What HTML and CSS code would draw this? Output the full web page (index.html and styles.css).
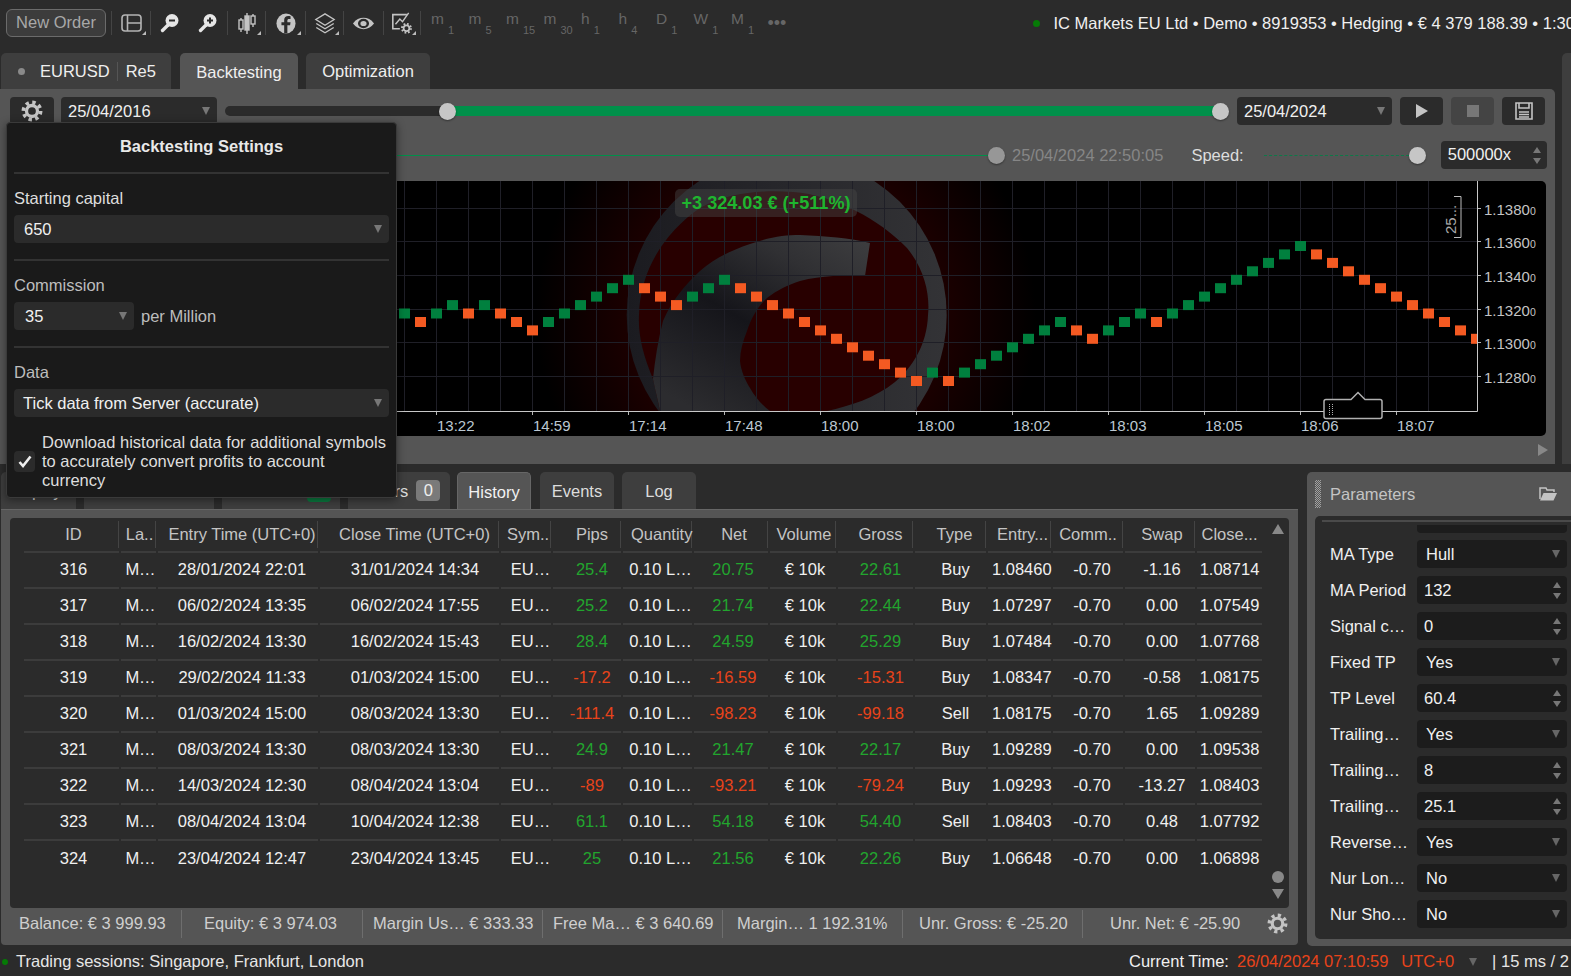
FILE: index.html
```html
<!DOCTYPE html>
<html lang="en">
<head>
    <meta charset="UTF-8">
    <title>cTrader Backtesting</title>
    <link rel="stylesheet" href="styles.css">
</head>
<body>
<svg class="defs" width="0" height="0">
    <symbol id="gear" viewBox="0 0 24 24">
        <circle cx="12" cy="12" r="6" fill="none" stroke="currentColor" stroke-width="3.6"/>
        <circle cx="12" cy="12" r="9.4" fill="none" stroke="currentColor" stroke-width="4" stroke-dasharray="3.7 3.68"/>
    </symbol>
    <symbol id="lens" viewBox="0 0 20 20">
        <circle cx="12" cy="7.5" r="6.5" fill="currentColor"/>
        <path d="M8 12 2.5 17.5" stroke="currentColor" stroke-width="3.4" stroke-linecap="round"/>
    </symbol>
</svg>

<div class="app">
    <header class="toolbar">
        <button class="new-order">New Order</button>
        <div class="tools">
            <span class="tool more">
                <svg width="21" height="18" viewBox="0 0 21 18"><rect x="1" y="1" width="19" height="16" rx="3" fill="none" stroke="#b4b4b4" stroke-width="1.600"/><path d="M6.500 1v16M6.500 9h13.500" stroke="#b4b4b4" stroke-width="1.600"/></svg>
            </span>
            <span class="tool plain">
                <svg width="20" height="20"><use href="#lens"/><path d="M9 7.5h6" stroke="#2b2b2b" stroke-width="2"/></svg>
            </span>
            <span class="tool">
                <svg width="20" height="20"><use href="#lens"/><path d="M9 7.5h6M12 4.5v6" stroke="#2b2b2b" stroke-width="2"/></svg>
            </span>
            <span class="tool more">
                <svg width="18" height="21" viewBox="0 0 18 21" fill="none" stroke="#c4c4c4" stroke-width="1.400"><path d="M3 5v14M9 0v21M15 1v13"/><rect x="1" y="7" width="4" height="9" fill="#2b2b2b"/><rect x="7" y="3" width="4" height="14" fill="#c4c4c4"/><rect x="13" y="3" width="4" height="8" fill="#2b2b2b"/></svg>
            </span>
            <span class="tool more">
                <svg width="20" height="21" viewBox="0 0 22 24" preserveAspectRatio="none"><ellipse cx="11" cy="12" rx="10.500" ry="11.500" fill="#c4c4c4"/><path d="M12.500 23v-9h3l.5-3.500h-3.500V8.500c0-1 .5-1.700 1.800-1.700H16V3.700c-.6-.1-1.500-.2-2.500-.2-2.700 0-4.500 1.600-4.500 4.600v2.400H6V14h3v9z" fill="#2b2b2b"/></svg>
            </span>
            <span class="tool more">
                <svg width="22" height="21" viewBox="0 0 24 24" preserveAspectRatio="none" fill="none" stroke="#c4c4c4" stroke-width="1.500"><path d="M12 1 22 7.500 12 14 2 7.500z"/><path d="M2.500 12 12 18 21.500 12M2.500 16.500 12 22.500 21.500 16.500"/></svg>
            </span>
            <span class="tool plain">
                <svg width="23" height="13" viewBox="0 0 24 16" preserveAspectRatio="none"><path d="M1 8C4 3 8 1 12 1s8 2 11 7c-3 5-7 7-11 7S4 13 1 8z" fill="#c4c4c4"/><circle cx="12" cy="8" r="4.500" fill="none" stroke="#2b2b2b" stroke-width="2.600"/></svg>
            </span>
            <span class="tool more">
                <svg width="23" height="22" viewBox="0 0 26 25"><path d="M18 3H2v16h8" fill="none" stroke="#c4c4c4" stroke-width="1.800"/><path d="M5 14 10 8l3 3 7-10" fill="none" stroke="#c4c4c4" stroke-width="1.600"/><use href="#gear" x="11" y="12" width="13" height="13" color="#c4c4c4"/></svg>
            </span>
        </div>
        <div class="timeframes">
            <span class="tf">m<sub>1</sub></span>
            <span class="tf">m<sub>5</sub></span>
            <span class="tf">m<sub>15</sub></span>
            <span class="tf">m<sub>30</sub></span>
            <span class="tf">h<sub>1</sub></span>
            <span class="tf">h<sub>4</sub></span>
            <span class="tf">D<sub>1</sub></span>
            <span class="tf">W<sub>1</sub></span>
            <span class="tf">M<sub>1</sub></span>
            <span class="tf-more">•••</span>
        </div>
        <i class="dot conn"></i>
        <span class="account">IC Markets EU Ltd • Demo • 8919353 • Hedging • € 4 379 188.39 • 1:30</span>
    </header>

    <nav class="tabs">
        <div class="tab tab-symbol"><i class="dot grey"></i><span class="sym">EURUSD</span><span class="bot">Re5</span></div>
        <div class="tab tab-backtest active">Backtesting</div>
        <div class="tab tab-optimize">Optimization</div>
    </nav>

    <section class="upper">
        <div class="bt-panel">
            <div class="bt-row">
                <button class="icon-btn gear-btn"><svg width="22" height="22"><use href="#gear"/></svg></button>
                <div class="select date-from">25/04/2016</div>
                <div class="range">
                    <span class="range-off"></span>
                    <i class="thumb"></i>
                    <span class="range-on"></span>
                    <i class="thumb"></i>
                </div>
                <div class="select date-to">25/04/2024</div>
                <button class="icon-btn"><svg width="12" height="14"><path d="M0 0 12 7 0 14z" fill="#c4c4c4"/></svg></button>
                <button class="icon-btn off"><svg width="12" height="12"><rect width="12" height="12" fill="#777"/></svg></button>
                <button class="icon-btn"><svg width="18" height="18" viewBox="0 0 18 18" fill="none" stroke="#c4c4c4" stroke-width="1.600"><path d="M1 1h16v16H1z"/><path d="M4 1v5h10V1M4 10h10M4 12.500h10M4 15h10"/></svg></button>
            </div>
            <div class="bt-row second">
                <span class="progress"></span>
                <i class="thumb dim"></i>
                <span class="now">25/04/2024 22:50:05</span>
                <span class="speed-label">Speed:</span>
                <span class="speed-line"></span>
                <i class="thumb"></i>
                <div class="speed-box spin">500000x</div>
            </div>
            <div class="chart">
                <svg class="chart-svg" width="1535" height="255" viewBox="10 181 1535 255">
                    <defs>
                        <radialGradient id="glow" gradientUnits="userSpaceOnUse" cx="786" cy="315" r="250">
                            <stop offset="0" stop-color="#200000"/>
                            <stop offset=".62" stop-color="#1c0000"/>
                            <stop offset="1" stop-color="#000"/>
                        </radialGradient>
                        <linearGradient id="swirl" x1=".9" y1="0" x2=".2" y2="1">
                            <stop offset="0" stop-color="#3c3c3e"/>
                            <stop offset=".22" stop-color="#303033"/>
                            <stop offset=".55" stop-color="#15151a"/>
                            <stop offset="1" stop-color="#2c2c2f"/>
                        </linearGradient>
                        <linearGradient id="ring" x1="0" y1="0" x2="1" y2="0">
                            <stop offset="0" stop-color="#1b1b20"/>
                            <stop offset="1" stop-color="#333336"/>
                        </linearGradient>
                        <clipPath id="plot"><rect x="397" y="181" width="1081" height="230"/></clipPath>
                    </defs>
                    <g clip-path="url(#plot)">
                        <rect x="450" y="181" width="680" height="230" fill="url(#glow)"/>
                        <circle cx="786.700" cy="315" r="160" fill="url(#ring)"/>
                        <path d="M653 379C643 355 638 335 639 315 640 270 665 232 700 208 730 192 760 190 793 192 835 195 880 220 907 248 925 270 930 295 928 315 927 345 912 368 895 382 875 398 850 406 827 411H660z" fill="#280000"/>
                        <path d="M653 379C655 360 658 340 663 321 672 300 685 285 700 271 715 258 732 250 750 244 770 237 785 235 800 235 825 236 850 238 870 243L865 276C855 275 845 275 833 276 822 277 811 278 800 281 788 285 777 290 767 298 757 307 751 319 747 331 743 341 740 351 740 361 741 371 745 380 750 388 755 397 762 405 770 411H660C658 400 655 390 653 379z" fill="url(#swirl)"/>
                    </g>

                    <path class="grid" d="M397 208.500H1478M397 241.500H1478M397 275.500H1478M397 309.500H1478M397 342.500H1478M397 376.500H1478M404.500 181V411M436.500 181V411M468.500 181V411M500.500 181V411M532.500 181V411M564.500 181V411M596.500 181V411M628.500 181V411M660.500 181V411M692.500 181V411M724.500 181V411M756.500 181V411M788.500 181V411M820.500 181V411M852.500 181V411M884.500 181V411M916.500 181V411M948.500 181V411M980.500 181V411M1012.500 181V411M1044.500 181V411M1076.500 181V411M1108.500 181V411M1140.500 181V411M1172.500 181V411M1204.500 181V411M1236.500 181V411M1268.500 181V411M1300.500 181V411M1332.500 181V411M1364.500 181V411M1396.500 181V411M1428.500 181V411"/>

                    <g class="up">
                        <rect x="399" y="308.500"/><rect x="431" y="308.500"/><rect x="447" y="300.100"/><rect x="479" y="300.100"/>
                        <rect x="543" y="317"/><rect x="559" y="308.500"/><rect x="575" y="300.100"/><rect x="591" y="291.600"/>
                        <rect x="607" y="283.200"/><rect x="623" y="274.800"/><rect x="687" y="291.600"/><rect x="703" y="283.200"/>
                        <rect x="719" y="274.800"/><rect x="927" y="367.600"/><rect x="959" y="367.600"/><rect x="975" y="359.200"/>
                        <rect x="991" y="350.700"/><rect x="1007" y="342.300"/><rect x="1023" y="333.800"/><rect x="1039" y="325.400"/>
                        <rect x="1055" y="317"/><rect x="1103" y="325.400"/><rect x="1119" y="317"/><rect x="1135" y="308.500"/>
                        <rect x="1167" y="308.500"/><rect x="1183" y="300.100"/><rect x="1199" y="291.600"/><rect x="1215" y="283.200"/>
                        <rect x="1231" y="274.800"/><rect x="1247" y="266.300"/><rect x="1263" y="257.900"/><rect x="1279" y="249.400"/>
                        <rect x="1295" y="241"/>
                    </g>
                    <g class="down">
                        <rect x="415" y="317"/><rect x="463" y="308.500"/><rect x="495" y="308.500"/><rect x="511" y="317"/>
                        <rect x="527" y="325.400"/><rect x="639" y="283.200"/><rect x="655" y="291.600"/><rect x="671" y="300.100"/>
                        <rect x="735" y="283.200"/><rect x="751" y="291.600"/><rect x="767" y="300.100"/><rect x="783" y="308.500"/>
                        <rect x="799" y="317"/><rect x="815" y="325.400"/><rect x="831" y="333.800"/><rect x="847" y="342.300"/>
                        <rect x="863" y="350.700"/><rect x="879" y="359.200"/><rect x="895" y="367.600"/><rect x="911" y="376"/>
                        <rect x="943" y="376"/><rect x="1071" y="325.400"/><rect x="1087" y="333.800"/><rect x="1151" y="317"/>
                        <rect x="1311" y="249.400"/><rect x="1327" y="257.900"/><rect x="1343" y="266.300"/><rect x="1359" y="274.800"/>
                        <rect x="1375" y="283.200"/><rect x="1391" y="291.600"/><rect x="1407" y="300.100"/><rect x="1423" y="308.500"/>
                        <rect x="1439" y="317"/><rect x="1455" y="325.400"/><rect x="1471" y="333.800" class="clipped"/>
                    </g>

                    <path class="axis" d="M397 411.500H1477.500V181"/>
                    <path class="tick" d="M436.500 412v3M532.500 412v3M628.500 412v3M724.500 412v3M820.500 412v3M916.500 412v3M1012.500 412v3M1108.500 412v3M1204.500 412v3M1300.500 412v3M1396.500 412v3M1478 208.500h3M1478 241.500h3M1478 275.500h3M1478 309.500h3M1478 342.500h3M1478 376.500h3"/>

                    <g class="xlabels">
                        <text x="437" y="431">13:22</text><text x="533" y="431">14:59</text><text x="629" y="431">17:14</text>
                        <text x="725" y="431">17:48</text><text x="821" y="431">18:00</text><text x="917" y="431">18:00</text>
                        <text x="1013" y="431">18:02</text><text x="1109" y="431">18:03</text><text x="1205" y="431">18:05</text>
                        <text x="1301" y="431">18:06</text><text x="1397" y="431">18:07</text>
                    </g>
                    <g class="ylabels">
                        <text x="1484" y="215">1.1380<tspan class="small">0</tspan></text>
                        <text x="1484" y="248">1.1360<tspan class="small">0</tspan></text>
                        <text x="1484" y="282">1.1340<tspan class="small">0</tspan></text>
                        <text x="1484" y="316">1.1320<tspan class="small">0</tspan></text>
                        <text x="1484" y="349">1.1300<tspan class="small">0</tspan></text>
                        <text x="1484" y="383">1.1280<tspan class="small">0</tspan></text>
                    </g>

                    <path class="bracket" d="M1454 196.500h7v41h-7"/>
                    <text class="vtag" transform="rotate(-90 1456 234)" x="1456" y="234">25...</text>

                    <path class="handle" d="M1326 399.500h25l7-7 7 7h15q2 0 2 2v15q0 2-2 2h-54q-2 0-2-2v-15q0-2 2-2z"/>
                    <path class="handle-grip" d="M1329.500 404v12M1332.500 404v12"/>
                </svg>
                <div class="profit">+3 324.03 € (+511%)</div>
            </div>
            <div class="bt-foot"><svg width="10" height="12"><path d="M0 0 10 6 0 12z" fill="#888"/></svg></div>
        </div>
        <div class="side-strip"></div>
    </section>

    <section class="lower">
        <div class="results">
            <div class="res-tabs">
                <div class="res-tab w1">Equity</div>
                <div class="res-tab w2"></div>
                <div class="res-tab w3"><b class="badge green"></b></div>
                <div class="res-tab w4">Orders<b class="badge">0</b></div>
                <div class="res-tab active w5">History</div>
                <div class="res-tab w6">Events</div>
                <div class="res-tab w7">Log</div>
            </div>
            <div class="res-panel">
                <div class="table-card">
                    <table class="history">
                        <colgroup>
                            <col class="c1"><col class="c2"><col class="c3"><col class="c4"><col class="c5">
                            <col class="c6"><col class="c7"><col class="c8"><col class="c9"><col class="c10">
                            <col class="c11"><col class="c12"><col class="c13"><col class="c14"><col class="c15">
                        </colgroup>
                        <thead>
                            <tr><th>ID</th><th>La..</th><th>Entry Time (UTC+0)</th><th>Close Time (UTC+0)</th><th>Sym..</th><th>Pips</th><th>Quantity</th><th>Net</th><th>Volume</th><th>Gross</th><th>Type</th><th>Entry...</th><th>Comm..</th><th>Swap</th><th>Close...</th></tr>
                        </thead>
                        <tbody>
                            <tr><td>316</td><td>M…</td><td>28/01/2024 22:01</td><td>31/01/2024 14:34</td><td>EU…</td><td class="pos">25.4</td><td>0.10 L…</td><td class="pos">20.75</td><td>€ 10k</td><td class="pos">22.61</td><td>Buy</td><td>1.08460</td><td>-0.70</td><td>-1.16</td><td>1.08714</td></tr>
                            <tr><td>317</td><td>M…</td><td>06/02/2024 13:35</td><td>06/02/2024 17:55</td><td>EU…</td><td class="pos">25.2</td><td>0.10 L…</td><td class="pos">21.74</td><td>€ 10k</td><td class="pos">22.44</td><td>Buy</td><td>1.07297</td><td>-0.70</td><td>0.00</td><td>1.07549</td></tr>
                            <tr><td>318</td><td>M…</td><td>16/02/2024 13:30</td><td>16/02/2024 15:43</td><td>EU…</td><td class="pos">28.4</td><td>0.10 L…</td><td class="pos">24.59</td><td>€ 10k</td><td class="pos">25.29</td><td>Buy</td><td>1.07484</td><td>-0.70</td><td>0.00</td><td>1.07768</td></tr>
                            <tr><td>319</td><td>M…</td><td>29/02/2024 11:33</td><td>01/03/2024 15:00</td><td>EU…</td><td class="neg">-17.2</td><td>0.10 L…</td><td class="neg">-16.59</td><td>€ 10k</td><td class="neg">-15.31</td><td>Buy</td><td>1.08347</td><td>-0.70</td><td>-0.58</td><td>1.08175</td></tr>
                            <tr><td>320</td><td>M…</td><td>01/03/2024 15:00</td><td>08/03/2024 13:30</td><td>EU…</td><td class="neg">-111.4</td><td>0.10 L…</td><td class="neg">-98.23</td><td>€ 10k</td><td class="neg">-99.18</td><td>Sell</td><td>1.08175</td><td>-0.70</td><td>1.65</td><td>1.09289</td></tr>
                            <tr><td>321</td><td>M…</td><td>08/03/2024 13:30</td><td>08/03/2024 13:30</td><td>EU…</td><td class="pos">24.9</td><td>0.10 L…</td><td class="pos">21.47</td><td>€ 10k</td><td class="pos">22.17</td><td>Buy</td><td>1.09289</td><td>-0.70</td><td>0.00</td><td>1.09538</td></tr>
                            <tr><td>322</td><td>M…</td><td>14/03/2024 12:30</td><td>08/04/2024 13:04</td><td>EU…</td><td class="neg">-89</td><td>0.10 L…</td><td class="neg">-93.21</td><td>€ 10k</td><td class="neg">-79.24</td><td>Buy</td><td>1.09293</td><td>-0.70</td><td>-13.27</td><td>1.08403</td></tr>
                            <tr><td>323</td><td>M…</td><td>08/04/2024 13:04</td><td>10/04/2024 12:38</td><td>EU…</td><td class="pos">61.1</td><td>0.10 L…</td><td class="pos">54.18</td><td>€ 10k</td><td class="pos">54.40</td><td>Sell</td><td>1.08403</td><td>-0.70</td><td>0.48</td><td>1.07792</td></tr>
                            <tr><td>324</td><td>M…</td><td>23/04/2024 12:47</td><td>23/04/2024 13:45</td><td>EU…</td><td class="pos">25</td><td>0.10 L…</td><td class="pos">21.56</td><td>€ 10k</td><td class="pos">22.26</td><td>Buy</td><td>1.06648</td><td>-0.70</td><td>0.00</td><td>1.06898</td></tr>
                        </tbody>
                    </table>
                    <div class="scroll">
                        <i class="arrow-up"></i>
                        <span class="scroll-fill"></span>
                        <i class="scroll-thumb"></i>
                        <i class="arrow-down"></i>
                    </div>
                </div>
                <div class="stats">
                    <span class="stat s1">Balance: € 3 999.93</span>
                    <span class="stat s2">Equity: € 3 974.03</span>
                    <span class="stat s3">Margin Us… € 333.33</span>
                    <span class="stat s4">Free Ma… € 3 640.69</span>
                    <span class="stat s5">Margin… 1 192.31%</span>
                    <span class="stat s6">Unr. Gross: € -25.20</span>
                    <span class="stat s7">Unr. Net: € -25.90</span>
                    <svg class="stats-gear" width="21" height="21"><use href="#gear"/></svg>
                </div>
            </div>
        </div>

        <aside class="params">
            <div class="params-head">
                <i class="grip"></i>
                <span class="params-title">Parameters</span>
                <svg width="18" height="14" viewBox="0 0 18 14"><path d="M1 12V1h6l1 2h7v2" fill="none" stroke="#c4c4c4" stroke-width="1.500"/><path d="M4.500 6H18l-3.500 7.500H1z" fill="#c4c4c4"/></svg>
            </div>
            <div class="params-body">
                <div class="params-rule"></div>
                <div class="control cut"></div>
                <div class="param"><label>MA Type</label><div class="control select-ctl">Hull</div></div>
                <div class="param"><label>MA Period</label><div class="control spin">132</div></div>
                <div class="param"><label>Signal c…</label><div class="control spin">0</div></div>
                <div class="param"><label>Fixed TP</label><div class="control select-ctl">Yes</div></div>
                <div class="param"><label>TP Level</label><div class="control spin">60.4</div></div>
                <div class="param"><label>Trailing…</label><div class="control select-ctl">Yes</div></div>
                <div class="param"><label>Trailing…</label><div class="control spin">8</div></div>
                <div class="param"><label>Trailing…</label><div class="control spin">25.1</div></div>
                <div class="param"><label>Reverse…</label><div class="control select-ctl">Yes</div></div>
                <div class="param"><label>Nur Lon…</label><div class="control select-ctl">No</div></div>
                <div class="param"><label>Nur Sho…</label><div class="control select-ctl">No</div></div>
            </div>
        </aside>
    </section>

    <footer class="status">
        <i class="dot conn small"></i>
        <span class="sessions">Trading sessions: Singapore, Frankfurt, London</span>
        <span class="clock">Current Time:</span>
        <span class="clock-red time">26/04/2024 07:10:59</span>
        <span class="clock-red zone">UTC+0</span>
        <i class="clock-arrow"></i>
        <span class="latency">| 15 ms / 2 ms</span>
    </footer>

    <div class="popup">
        <h3 class="popup-title">Backtesting Settings</h3>
        <div class="popup-block">
            <div class="field-label bright">Starting capital</div>
            <div class="select full">650</div>
        </div>
        <div class="popup-block">
            <div class="field-label">Commission</div>
            <div class="inline-field"><div class="select short">35</div><span>per Million</span></div>
        </div>
        <div class="popup-block">
            <div class="field-label">Data</div>
            <div class="select full tight">Tick data from Server (accurate)</div>
        </div>
        <div class="check-row">
            <span class="checkbox"><svg width="14" height="13" viewBox="0 0 14 13"><path d="M1.500 7 5 11 12.500 1.500" fill="none" stroke="#eee" stroke-width="2.600"/></svg></span>
            <span class="check-text">Download historical data for additional symbols to accurately convert profits to account currency</span>
        </div>
    </div>
</div>
</body>
</html>
```

FILE: styles.css
```css
* {
    box-sizing: border-box;
}

body {
    margin: 0;
    background: #2b2b2b;
    font-family: "Liberation Sans", Arial, sans-serif;
    font-size: 16.5px;
    color: #e6e6e6;
}

.defs {
    display: block;
    height: 0;
}

button {
    font: inherit;
    padding: 0;
    border: none;
}

.app {
    position: relative;
    width: 1571px;
    height: 976px;
    overflow: hidden;
    background: #2b2b2b;
}

.dot {
    display: block;
    flex: none;
    width: 7px;
    height: 7px;
    border-radius: 50%;
}
.dot.grey { background: #8a8a8a; }
.dot.conn { background: #067a06; }

/* top toolbar */
.toolbar {
    display: flex;
    align-items: center;
    height: 46px;
    padding: 0 0 0 6px;
    white-space: nowrap;
}

.new-order {
    flex: none;
    width: 100px;
    height: 28px;
    margin-top: -1px;
    border: 1px solid #6b6b6b;
    border-radius: 6px;
    background: #3c3c3c;
    color: #a8a8a8;
}

.tools {
    display: flex;
    margin-left: 5px;
}

.tool {
    position: relative;
    display: flex;
    align-items: center;
    justify-content: center;
    width: 39px;
    height: 24px;
    border-left: 1px solid #444;
}
.tool:nth-child(2) { width: 38px; }
.tool:nth-child(3) { border-left: none; }
.tool:nth-child(4) { width: 38px; }
.tool:nth-child(5) { width: 40px; }
.tool:nth-child(6) { width: 38px; }
.tool:nth-child(7) { width: 40px; }
.tool:nth-child(8) { width: 38px; border-right: 1px solid #444; }

.tool.more::after {
    content: "";
    position: absolute;
    right: 4px;
    bottom: 0;
    border-style: solid;
    border-width: 0 0 4px 4px;
    border-color: transparent transparent #bbb transparent;
}

.timeframes {
    display: flex;
    align-items: center;
    margin-left: 10px;
    color: #666;
}

.tf {
    width: 37.500px;
    font-size: 15.500px;
    line-height: 20px;
    margin-top: -8px;
}
.tf sub {
    font-size: 11px;
    line-height: 0;
    vertical-align: -10px;
    margin-left: 4px;
}

.tf-more {
    font-size: 18px;
    margin-left: -1px;
}

.toolbar .conn {
    margin-left: 247px;
}

.account {
    margin-left: 13px;
    color: #f0f0f0;
}

/* main tabs */
.tabs {
    display: flex;
    height: 36px;
    margin-top: 7px;
}

.tab {
    display: flex;
    align-items: center;
    justify-content: center;
    border-radius: 5px 5px 0 0;
    background: #3e3e3e;
    color: #efefef;
}
.tab.active { background: #555; padding-top: 2px; }

.tab-symbol {
    width: 170px;
    margin-left: 1px;
    justify-content: flex-start;
    padding-left: 17px;
}
.tab-symbol .sym { margin-left: 15px; padding-right: 7px; border-right: 1px solid #555; }
.tab-symbol .bot { margin-left: 8px; }
.tab-backtest { width: 118px; margin-left: 9px; }
.tab-optimize { width: 124px; margin-left: 8px; }

/* backtest panel */
.upper {
    display: flex;
    height: 375px;
}

.bt-panel {
    flex: none;
    width: 1555px;
    padding: 8px 9px 0 10px;
    background: #555;
    border-radius: 0 5px 0 0;
}

.bt-row {
    display: flex;
    align-items: center;
    height: 28px;
}
.bt-row.second {
    margin-top: 16px;
}

.select {
    position: relative;
    display: flex;
    align-items: center;
    flex: none;
    height: 28px;
    padding-left: 7px;
    border-radius: 4px;
    background: #2b2b2b;
    color: #f0f0f0;
}
.select::after,
.select-ctl::after {
    content: "";
    position: absolute;
    right: 7px;
    top: 50%;
    margin-top: -4px;
    border-style: solid;
    border-width: 8px 4px 0 4px;
    border-color: #777 transparent transparent transparent;
}

.icon-btn {
    display: flex;
    align-items: center;
    justify-content: center;
    flex: none;
    width: 43px;
    height: 28px;
    margin-left: 8px;
    border-radius: 4px;
    background: #2b2b2b;
    color: #c4c4c4;
}
.icon-btn.off { background: #444; }
.gear-btn { margin-left: 0; width: 44px; }

.date-from {
    width: 156px;
    margin-left: 7px;
}
.date-to {
    width: 155px;
    margin-left: 8px;
}

.range {
    display: flex;
    align-items: center;
    flex: none;
    width: 1004px;
    margin-left: 8px;
}
.range-off {
    flex: none;
    width: 223px;
    height: 10px;
    margin-right: -9px;
    border-radius: 5px 0 0 5px;
    background: #2b2b2b;
}
.range-on {
    flex: none;
    width: 774px;
    height: 10px;
    margin: 0 -9px;
    background: #00904a;
}

.thumb {
    position: relative;
    z-index: 1;
    display: block;
    flex: none;
    width: 17px;
    height: 17px;
    border-radius: 50%;
    background: #c6c6c6;
    box-shadow: 0 1px 2px rgba(0, 0, 0, .4);
}
.thumb.dim { background: #979797; }

.progress {
    flex: none;
    width: 978px;
    height: 1px;
    background: #00904a;
}

.now {
    flex: none;
    margin-left: 7px;
    color: #868686;
}
.speed-label {
    flex: none;
    margin-left: 28px;
    color: #ddd;
}
.speed-line {
    flex: none;
    width: 145px;
    margin-left: 20px;
    border-top: 1px dashed #0d7a48;
}
.speed-box {
    position: relative;
    display: flex;
    align-items: center;
    flex: none;
    width: 106px;
    height: 28px;
    margin-left: 15px;
    padding: 0 0 2px 7px;
    border-radius: 4px;
    background: #2b2b2b;
    color: #f0f0f0;
}

.spin::before,
.spin::after {
    content: "";
    position: absolute;
    right: 6px;
    border-style: solid;
}
.spin::before {
    top: 6px;
    border-width: 0 4px 6px 4px;
    border-color: transparent transparent #777 transparent;
}
.spin::after {
    bottom: 5px;
    border-width: 6px 4px 0 4px;
    border-color: #777 transparent transparent transparent;
}

/* chart */
.chart {
    position: relative;
    height: 255px;
    margin-top: 12px;
    background: #000;
    border-radius: 0 5px 5px 0;
    overflow: hidden;
}
.chart-svg { display: block; }

.grid { fill: none; stroke: #1f1f27; stroke-width: 1; }
.up rect { width: 11px; height: 10px; fill: #00803e; }
.down rect { width: 11px; height: 10px; fill: #f45a22; }
.down rect.clipped { width: 6px; }
.axis { fill: none; stroke: #c8c8c8; stroke-width: 1; }
.tick { fill: none; stroke: #b5b5b5; stroke-width: 1; }

.xlabels text {
    font-size: 15px;
    fill: #bcc8d2;
}
.ylabels text {
    font-size: 15px;
    fill: #c4c4c4;
}
.ylabels .small { font-size: 10.500px; }

.bracket { fill: none; stroke: #bbb; stroke-width: 1; }
.vtag { font-size: 15px; fill: #aaa; }
.handle { fill: #000; stroke: #b0b0b0; stroke-width: 1.500; }
.handle-grip { stroke: #b0b0b0; stroke-width: 1; stroke-dasharray: 1 1; }

.profit {
    position: absolute;
    left: 665px;
    top: 8px;
    width: 182px;
    height: 28px;
    line-height: 28px;
    text-align: center;
    border-radius: 5px;
    background: rgba(70, 70, 70, .45);
    color: #1fb52f;
    font-size: 18.100px;
    font-weight: bold;
}

.bt-foot {
    display: flex;
    justify-content: flex-end;
    padding: 8px 0 0;
    margin-right: -2px;
}

.side-strip {
    width: 9px;
    margin-left: 7px;
    margin-top: -36px;
    background: #3e3e3e;
    border-radius: 5px 0 0 0;
}

/* results */
.lower {
    display: flex;
    height: 474px;
    margin-top: 8px;
}

.results {
    flex: none;
    width: 1297px;
    margin-left: 1px;
}

.res-tabs {
    display: flex;
    height: 37px;
}

.res-tab {
    display: flex;
    align-items: center;
    justify-content: center;
    height: 37px;
    margin-right: 8px;
    padding-top: 2px;
    border-radius: 5px 5px 0 0;
    background: #3e3e3e;
    color: #dcdcdc;
}
.res-tab.active {
    border: 1px solid #666;
    border-bottom: none;
    background: #555;
    color: #f2f2f2;
    padding-top: 3px;
}
.w1 { width: 75px; }
.w2 { width: 130px; }
.w3 { width: 118px; }
.w4 { width: 102px; margin-right: 7px; }
.w5 { width: 74px; margin-right: 9px; }
.w6 { width: 74px; }
.w7 { width: 74px; }

.badge {
    display: block;
    width: 24px;
    height: 21px;
    margin-left: 8px;
    margin-top: -2px;
    border-radius: 4px;
    background: #7a7a7a;
    color: #eee;
    font-weight: normal;
    line-height: 21px;
    text-align: center;
}
.badge.green {
    margin: 0 0 0 76px;
    background: #0a7a3f;
}

.res-panel {
    height: 436px;
    padding: 8px 9px 0 9px;
    border-top: 1px solid #666;
    background: #555;
    border-radius: 0 0 4px 4px;
}

.table-card {
    display: flex;
    height: 390px;
    padding-left: 12px;
    border-radius: 4px;
    background: #2b2b2b;
}

.history {
    table-layout: fixed;
    flex: none;
    width: 1242px;
    height: 0;
    border-collapse: separate;
    border-spacing: 2px 0;
    color: #f0f0f0;
}

.c1 { width: 95px; }
.c2 { width: 35px; }
.c3 { width: 160px; }
.c4 { width: 179px; }
.c5 { width: 50px; }
.c6 { width: 68px; }
.c7 { width: 69px; }
.c8 { width: 74px; }
.c9 { width: 66px; }
.c10 { width: 75px; }
.c11 { width: 71px; }
.c12 { width: 63px; }
.c13 { width: 70px; }
.c14 { width: 70px; }
.c15 { width: 65px; }

.history th {
    height: 35px;
    padding: 0;
    border-bottom: 2px solid #3c3c3c;
    font-weight: normal;
    color: #c4c4c4;
    white-space: nowrap;
    background: linear-gradient(#444, #444) right 3px / 1px 27px no-repeat;
}
.history th:last-child { background: none; }

/* nudges so the centred headers sit where the app draws them */
.history th:nth-child(1), .history th:nth-child(5), .history th:nth-child(14) { padding-left: 4px; }
.history th:nth-child(2), .history th:nth-child(9) { padding-left: 2px; }
.history th:nth-child(3), .history th:nth-child(7), .history th:nth-child(11) { padding-left: 8px; }
.history th:nth-child(4), .history th:nth-child(6), .history th:nth-child(10) { padding-left: 10px; }
.history th:nth-child(8), .history th:nth-child(12) { padding-left: 6px; }

.history td {
    height: 36px;
    padding: 0 0 2px;
    border-bottom: 2px solid #3c3c3c;
    text-align: center;
    white-space: nowrap;
}
.history tr:last-child td { border-bottom: none; }
.history td:nth-child(1), .history td:nth-child(2), .history td:nth-child(8), .history td:nth-child(9), .history td:nth-child(12), .history td:nth-child(14) { padding-left: 4px; }
.history td:nth-child(3), .history td:nth-child(13) { padding-left: 8px; }
.history td:nth-child(4) { padding-left: 11px; }
.history td:nth-child(5) { padding-left: 9px; }
.history td:nth-child(6), .history td:nth-child(10), .history td:nth-child(11) { padding-left: 10px; }
.history td:nth-child(7) { padding-left: 6px; }
.history td.pos { color: #22a52e; }
.history td.neg { color: #e8431a; }

.scroll {
    display: flex;
    flex-direction: column;
    align-items: center;
    width: 20px;
    margin-left: 4px;
    padding: 6px 0 9px;
}
.scroll-fill { flex: 1; }
.scroll-thumb {
    display: block;
    width: 12px;
    height: 12px;
    margin-bottom: 6px;
    border-radius: 50%;
    background: #888;
}
.arrow-up, .arrow-down {
    display: block;
    border-style: solid;
}
.arrow-up {
    border-width: 0 6px 10px 6px;
    border-color: transparent transparent #888 transparent;
}
.arrow-down {
    border-width: 10px 6px 0 6px;
    border-color: #888 transparent transparent transparent;
}

.stats {
    display: flex;
    align-items: flex-start;
    height: 38px;
    padding-top: 2px;
    color: #cfcfcf;
}

.stat {
    display: block;
    flex: none;
    height: 28px;
    line-height: 26px;
    border-right: 1px solid #6e6e6e;
    white-space: nowrap;
}
.s1 { width: 172px; padding-left: 9px; }
.s2 { width: 181px; padding-left: 22px; }
.s3 { width: 180px; padding-left: 10px; }
.s4 { width: 180px; padding-left: 10px; }
.s5 { width: 180px; padding-left: 14px; }
.s6 { width: 180px; padding-left: 16px; }
.s7 { width: 184px; padding-left: 27px; border-right: none; }

.stats-gear {
    flex: none;
    margin-top: 3px;
    color: #c4c4c4;
}

/* parameters */
.params {
    flex: none;
    width: 264px;
    height: 474px;
    margin-left: 9px;
    padding: 0 0 7px 8px;
    background: #555;
    border-radius: 5px 0 0 5px;
}

.params-head {
    display: flex;
    align-items: center;
    height: 44px;
    padding-right: 14px;
}

.grip {
    display: block;
    width: 6px;
    height: 28px;
    background: repeating-conic-gradient(#a0a0a0 0 25%, transparent 0 50%) 0 0 / 2px 2px;
}

.params-title {
    flex: 1;
    margin-left: 9px;
    margin-top: 1px;
    color: #c4c4c4;
}

.params-body {
    height: 423px;
    overflow: hidden;
    border-radius: 5px 0 0 5px;
    background: #2b2b2b;
}

.params-rule {
    height: 2px;
    margin: 4px 0 0 7px;
    background: #4a4a4a;
}

.control {
    position: relative;
    display: flex;
    align-items: center;
    flex: none;
    width: 150px;
    height: 28px;
    padding-left: 9px;
    border-radius: 4px;
    background: #1c1c1c;
    color: #f0f0f0;
}
.control.cut {
    height: 8px;
    margin: 3px 0 7px 102px;
    border-radius: 0 0 4px 4px;
}
.control.spin { padding-left: 7px; }

.param {
    display: flex;
    align-items: center;
    height: 28px;
    margin-bottom: 8px;
    padding-left: 15px;
}
.param label {
    width: 87px;
    flex: none;
    color: #f0f0f0;
    white-space: nowrap;
}
.select-ctl::after {
    border-color: #666 transparent transparent transparent;
}

/* status bar */
.status {
    display: flex;
    align-items: center;
    height: 30px;
    white-space: nowrap;
}
.status .small {
    width: 6px;
    height: 6px;
    margin-left: 2px;
    margin-top: 2px;
}
.sessions {
    flex: none;
    width: 1113px;
    margin-left: 8px;
}
.clock { flex: none; color: #f0f0f0; }
.clock-red { flex: none; color: #e8431a; }
.time { margin-left: 8px; }
.zone { margin-left: 13px; }
.clock-arrow {
    display: block;
    margin: 2px 0 0 15px;
    border-style: solid;
    border-width: 8px 4px 0 4px;
    border-color: #666 transparent transparent transparent;
}
.latency { flex: none; margin-left: 15px; }

/* settings popup */
.popup {
    position: absolute;
    left: 6px;
    top: 122px;
    width: 391px;
    height: 376px;
    padding: 0 7px;
    border: 1px solid #3a3a3a;
    border-radius: 4px;
    background: #1a1a1a;
    box-shadow: 0 2px 8px rgba(0, 0, 0, .45);
}

.popup-title {
    height: 51px;
    margin: 0;
    line-height: 47px;
    border-bottom: 2px solid #333;
    text-align: center;
    font-size: 16.500px;
    font-weight: bold;
    color: #e8e8e8;
}

.popup-block {
    height: 87px;
    padding-top: 14px;
    border-bottom: 2px solid #333;
}
.popup-block:nth-of-type(3) {
    height: auto;
    border-bottom: none;
}

.field-label {
    height: 20px;
    line-height: 20px;
    margin-bottom: 7px;
    color: #bdbdbd;
}
.field-label.bright { color: #dedede; }

.select.full {
    padding-left: 10px;
    background: #2b2b2b;
}
.select.tight { padding-left: 9px; }
.select.short {
    width: 120px;
    padding-left: 11px;
}

.inline-field {
    display: flex;
    align-items: center;
    color: #bdbdbd;
}
.inline-field span { margin-left: 7px; }

.check-row {
    display: flex;
    align-items: center;
    margin-top: 16px;
}
.checkbox {
    display: flex;
    align-items: center;
    justify-content: center;
    flex: none;
    width: 21px;
    height: 21px;
    border-radius: 4px;
    background: #2b2b2b;
}
.check-text {
    margin-left: 7px;
    line-height: 19px;
    color: #dedede;
}
```
